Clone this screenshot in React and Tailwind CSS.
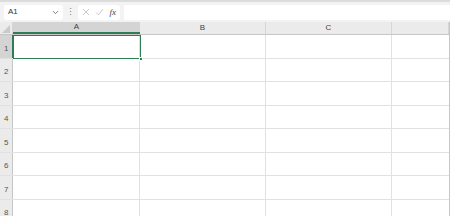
import { ChevronDown } from "lucide-react";

const rows = [1, 2, 3, 4, 5, 6, 7, 8];
const cols = [
  { name: "A", w: "w-[127px]" },
  { name: "B", w: "w-[126px]" },
  { name: "C", w: "w-[126px]" },
  { name: "", w: "flex-1" },
];

function App() {
  return (
    <div
      className="w-[450px] h-[216px] overflow-hidden bg-white flex flex-col"
      style={{ fontFamily: "'Liberation Sans', Arial, sans-serif" }}
    >
      {/* formula bar */}
      <div className="h-[22px] shrink-0 bg-[#f3f3f3] border-t-2 border-[#dcdcdc] flex items-center pl-[4px] gap-[3px]">
        <div className="w-[59px] h-[15px] bg-white rounded-[3px] flex items-center justify-between pl-[4px] pr-[3px]">
          <span className="text-[8px] text-[#333]">A1</span>
          <ChevronDown size={9} strokeWidth={2} className="text-[#555]" />
        </div>
        <span className="text-[9px] text-[#777] w-[9px] text-center leading-none">⋮</span>
        <div className="w-[42px] h-[15px] bg-white rounded-[3px] flex items-center justify-between px-[4px]">
          <svg width="8" height="8" viewBox="0 0 8 8" className="text-[#c4c4c4]">
            <path d="M1 1L7 7M7 1L1 7" stroke="currentColor" strokeWidth="0.9" fill="none" />
          </svg>
          <svg width="9" height="8" viewBox="0 0 9 8" className="text-[#c4c4c4]">
            <path d="M1 4.5L3.5 7L8 1" stroke="currentColor" strokeWidth="0.9" fill="none" />
          </svg>
          <span
            className="text-[9px] italic text-[#444] leading-none"
            style={{ fontFamily: "'Liberation Serif', serif" }}
          >
            fx
          </span>
        </div>
        <div className="flex-1 h-[15px] bg-white ml-[1px]" />
      </div>

      {/* column headers */}
      <div className="h-[13px] shrink-0 flex bg-[#ebebeb] border-b border-[#c6c6c6] border-r border-r-[#c6c6c6]">
        <div className="w-[13px] relative border-r border-[#d6d6d6] bg-[#ebebeb]">
          <svg width="8" height="8" viewBox="0 0 8 8" className="absolute right-[2px] bottom-[1px]">
            <path d="M8 0L8 8L0 8Z" fill="#c9c9c9" />
          </svg>
        </div>
        {cols.map((c, i) => (
          <div
            key={i}
            className={`${c.w} flex items-center justify-center text-[8px] text-[#444] ${
              i === 0
                ? "bg-[#d4d4d4] border-b-2 border-[#2f7d55]"
                : "border-r border-[#d6d6d6]"
            }`}
          >
            {c.name}
          </div>
        ))}
      </div>

      {/* grid */}
      <div className="flex-1 flex flex-col border-r border-[#c6c6c6] relative">
        {rows.map((r) => (
          <div key={r} className="h-[23.5px] shrink-0 flex border-b border-[#e1e1e1]">
            <div
              className={`w-[13px] shrink-0 flex items-end justify-start pl-[4px] pb-[3px] text-[8px] text-[#555] ${
                r === 1 ? "bg-[#d4d4d4] border-r border-[#2f7d55]" : "bg-[#ebebeb] border-r border-[#c6c6c6]"
              }`}
            >
              {r}
            </div>
            {cols.map((c, i) => (
              <div key={i} className={`${c.w} ${i < 3 ? "border-r border-[#e1e1e1]" : ""}`} />
            ))}
          </div>
        ))}
        {/* selected cell */}
        <div className="absolute left-[12.5px] top-0 w-[128.5px] h-[24px] border-[1.5px] border-[#2f7d55]">
          <div className="absolute right-[-3px] bottom-[-3px] w-[4px] h-[4px] bg-[#2f7d55] border-[0.5px] border-white" />
        </div>
      </div>
    </div>
  );
}

export default App;
